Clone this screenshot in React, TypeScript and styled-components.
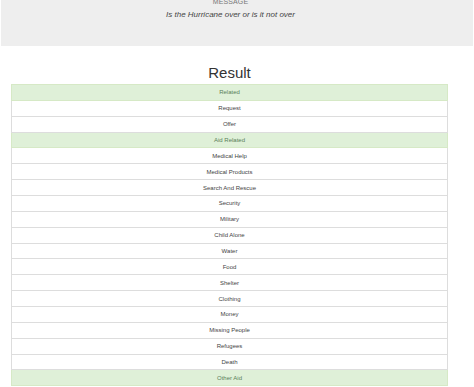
import React from 'react';
import styled, { createGlobalStyle } from 'styled-components';

const GlobalStyle = createGlobalStyle`
    html, body {
        margin: 0;
        padding: 0;
        background: #fff;
        font-family: "Liberation Sans", Arial, sans-serif;
        color: #333;
        overflow: hidden;
    }
`;

const Jumbotron = styled.section`
    height: 46px;
    background: #eee;
    margin: 0 1px 0 1px;
    overflow: hidden;
`;

const Container = styled.div`
    width: 437px;
    margin-left: 11px;
    text-align: center;
`;

const Label = styled.div`
    font-size: 7px;
    line-height: 7px;
    margin-top: -2px;
    color: #777;
    letter-spacing: 0.1px;
`;

const Message = styled.h2`
    margin: 5px 0 0;
    font-size: 8px;
    line-height: 10px;
    font-style: italic;
    font-weight: normal;
    color: #444;
`;

const Title = styled.h1`
    margin: 18px 0 3px;
    font-size: 15px;
    line-height: 17px;
    font-weight: normal;
    color: #333;
`;

const Table = styled.table`
    width: 100%;
    border-collapse: collapse;
    font-size: 6px;
`;

const Cell = styled.td<{ $group?: boolean }>`
    height: 14.87px;
    padding: 0;
    border: 1px solid #ddd;
    text-align: center;
    vertical-align: middle;
    background: ${p => (p.$group ? '#dff0d8' : '#fff')};
    color: ${p => (p.$group ? '#5a7f5a' : '#444')};
    border-color: ${p => (p.$group ? '#d6e9c6' : '#ddd')};
`;

const rows: { label: string; group?: boolean }[] = [
    { label: 'Related', group: true },
    { label: 'Request' },
    { label: 'Offer' },
    { label: 'Aid Related', group: true },
    { label: 'Medical Help' },
    { label: 'Medical Products' },
    { label: 'Search And Rescue' },
    { label: 'Security' },
    { label: 'Military' },
    { label: 'Child Alone' },
    { label: 'Water' },
    { label: 'Food' },
    { label: 'Shelter' },
    { label: 'Clothing' },
    { label: 'Money' },
    { label: 'Missing People' },
    { label: 'Refugees' },
    { label: 'Death' },
    { label: 'Other Aid', group: true },
];

const App = () => (
    <>
        <GlobalStyle />
        <Jumbotron>
            <Container>
                <Label>MESSAGE</Label>
                <Message>Is the Hurricane over or is it not over</Message>
            </Container>
        </Jumbotron>
        <Container>
            <Title>Result</Title>
            <Table>
                <tbody>
                    {rows.map(({ label, group }) => (
                        <tr key={label}>
                            <Cell $group={group}>{label}</Cell>
                        </tr>
                    ))}
                </tbody>
            </Table>
        </Container>
    </>
);

export default App;
